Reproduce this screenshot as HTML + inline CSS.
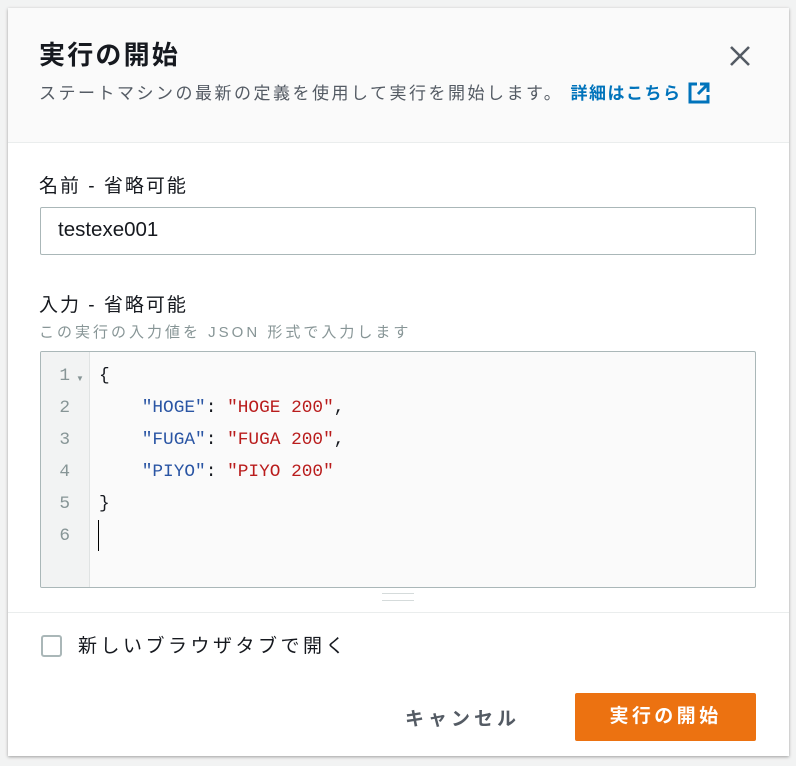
<!DOCTYPE html><html><head><meta charset="utf-8"><style>
*{box-sizing:border-box;margin:0;padding:0}
body{width:796px;height:766px;background:#f2f3f3;position:relative;overflow:hidden;font-family:"Liberation Sans","Noto Sans CJK JP",sans-serif;}
.m{position:absolute;left:8px;top:8px;width:781px;height:748px;background:#fff;box-shadow:0 1px 3px rgba(0,0,0,.35);}
.hd{position:absolute;left:0;top:0;width:100%;height:135px;background:#fafafa;border-bottom:1px solid #eaeded}
.a{position:absolute;white-space:nowrap}
.code{font-family:"Liberation Mono","DejaVu Sans Mono",monospace;font-size:17.8px}
</style></head><body>
<div class="m">
<div class="hd"></div>
<div class="a" style="left:31px;top:27px;font-size:26px;letter-spacing:2.2px;font-weight:bold;color:#16191f">実行の開始</div>
<svg class="a" style="left:720px;top:36px" width="24" height="24" viewBox="0 0 24 24"><path d="M3 3L21 21M21 3L3 21" stroke="#545b64" stroke-width="2.6"/></svg>
<div class="a" style="left:31px;top:71px;font-size:17px;letter-spacing:2.5px;color:#545b64">ステートマシンの最新の定義を使用して実行を開始します。 <span style="color:#0073bb;font-weight:bold;letter-spacing:1.5px">詳細はこちら</span></div>
<svg class="a" style="left:679px;top:73px" width="24" height="24" viewBox="0 0 24 24"><path d="M10 3H3V21H21V14" fill="none" stroke="#0073bb" stroke-width="3"/><path d="M13 3H21V11M21 3L11 13" fill="none" stroke="#0073bb" stroke-width="3"/></svg>
<div class="a" style="left:31px;top:163px;font-size:19px;letter-spacing:2px;color:#16191f">名前 - 省略可能</div>
<div class="a" style="left:32px;top:199px;width:716px;height:48px;border:1px solid #aab7b8;border-radius:2px;padding:10px 17px;font-size:20.5px;color:#16191f">testexe001</div>
<div class="a" style="left:31px;top:282px;font-size:19px;letter-spacing:2px;color:#16191f">入力 - 省略可能</div>
<div class="a" style="left:31px;top:313px;font-size:15px;letter-spacing:3px;color:#879596">この実行の入力値を JSON 形式で入力します</div>
<div class="a" style="left:32px;top:343px;width:716px;height:237px;border:1px solid #aab7b8;border-radius:2px;background:#fafafa;overflow:hidden">
<div style="position:absolute;left:0;top:0;width:49px;height:100%;background:#f2f3f3;border-right:1px solid #e0e3e3"></div>
<div class="code a" style="left:0;top:8px;width:29px;text-align:right;color:#879596;line-height:32px">1<br>2<br>3<br>4<br>5<br>6</div>
<div class="a" style="left:35px;top:22px;font-size:8px;color:#879596">▼</div>
<div class="code a" style="left:58px;top:8px;line-height:32px;color:#16191f">{<br>&nbsp;&nbsp;&nbsp;&nbsp;<span style="color:#2a55a4">"HOGE"</span>: <span style="color:#b91c1c">"HOGE 200"</span>,<br>&nbsp;&nbsp;&nbsp;&nbsp;<span style="color:#2a55a4">"FUGA"</span>: <span style="color:#b91c1c">"FUGA 200"</span>,<br>&nbsp;&nbsp;&nbsp;&nbsp;<span style="color:#2a55a4">"PIYO"</span>: <span style="color:#b91c1c">"PIYO 200"</span><br>}</div>
<div class="a" style="left:57px;top:168px;width:1px;height:31px;background:#000"></div>
</div>
<div class="a" style="left:374px;top:585px;width:32px;height:1px;background:#d5dbdb"></div>
<div class="a" style="left:374px;top:592px;width:32px;height:1px;background:#d5dbdb"></div>
<div class="a" style="left:0;top:604px;width:100%;height:1px;background:#eaeded"></div>
<div class="a" style="left:33px;top:627px;width:21px;height:22px;border:2px solid #aab7b8;border-radius:3px"></div>
<div class="a" style="left:70px;top:623px;font-size:19px;letter-spacing:3.5px;color:#16191f">新しいブラウザタブで開く</div>
<div class="a" style="left:397px;top:696px;font-size:19px;letter-spacing:4px;font-weight:bold;color:#545b64">キャンセル</div>
<div class="a" style="left:567px;top:685px;width:181px;height:48px;background:#ec7211;border-radius:2px;color:#fff;font-size:19px;letter-spacing:3.4px;font-weight:bold;text-align:center;line-height:48px">実行の開始</div>
</div>
</body></html>
